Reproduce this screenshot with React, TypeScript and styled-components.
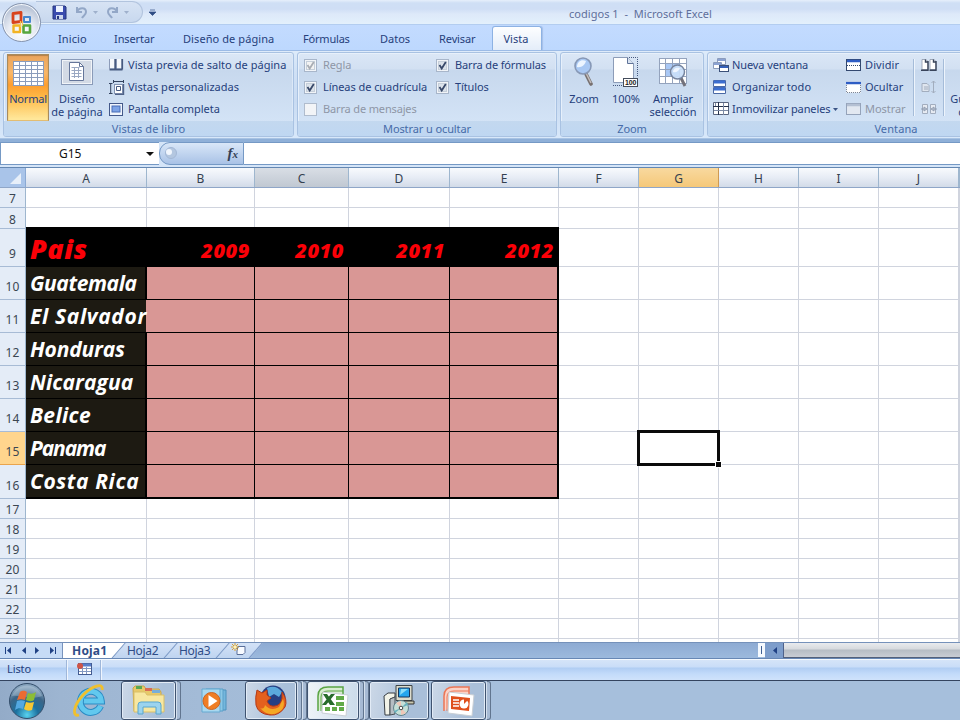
import React from "react";
import styled, { createGlobalStyle, css } from "styled-components";

const Global = createGlobalStyle`
  * { box-sizing: border-box; }
  html, body { margin: 0; padding: 0; overflow: hidden; }
  body { font: 11px/14px "Noto Sans", "Open Sans", sans-serif; color: #263f7c; }
  svg { display: block; flex: none; }
`;

const Window = styled.div`
  width: 960px; height: 720px; overflow: hidden; position: relative;
  display: flex; flex-direction: column; background: #c3d9f5;
`;

/* ---------- title bar ---------- */
const TitleBar = styled.header`
  height: 25px; flex: none; display: flex; align-items: center;
  background: linear-gradient(#e6effb 0, #cfdff5 3px, #cfdef5 9px, #dde9f9 14px, #e3f0fc 24px);
  border-bottom: 1px solid #b3cdf0;
`;
const QuickAccess = styled.div`
  margin-left: 36px; width: 107px; height: 22px; display: flex; align-items: center;
  padding-left: 16px; border: 1px solid #b2c4de; border-left: 0; border-radius: 0 11px 11px 0;
  background: linear-gradient(#d7e3f4, #c8d8ee);
`;
const Title = styled.div`
  margin-left: 413px; margin-top: 3px; letter-spacing: 0.03px;
  color: #5f6f9b; white-space: pre;
`;
const OfficeButton = styled.div`
  position: absolute; left: 2px; top: 3px; width: 39px; height: 39px; border-radius: 50%;
  border: 1px solid #8593ac; display: grid; place-items: center;
  background: radial-gradient(circle at 50% 75%, #fff 0, #e7ebf3 40%, #b9c4d7 75%, #dfe5ee 100%);
  box-shadow: inset 0 0 0 1px #f6f9fd;
`;

/* ---------- ribbon ---------- */
const Tabs = styled.nav`
  height: 25px; flex: none; display: grid; align-items: end;
  grid-template-columns: 58px 56px 69px 120px 77px 59px 53px 49px;
  background: linear-gradient(#c3dbff, #bdd8fe);
`;
const TabText = styled.span<{ $ls: number }>`
  height: 18px; white-space: nowrap; letter-spacing: ${(p) => p.$ls}px;
`;
const ActiveTab = styled.span`
  width: 50px; height: 24px; display: grid; place-items: center; letter-spacing: .05px;
  padding-right: 2px;
  border: 1px solid #8db2e3; border-bottom: 0; border-radius: 3px 3px 0 0;
  background: linear-gradient(#fdfeff, #e4edf9); box-shadow: 1px 0 1px #a6bfe8;
`;
const Ribbon = styled.section`
  height: 89px; flex: none; display: flex; gap: 3px; padding: 1px 0 2px 3px;
  border-top: 1px solid #9cbbe6; border-bottom: 1px solid #a8c3e4;
  background: linear-gradient(#deebfa, #d0e1f6 20px, #c9dbf2 50px, #d8e8fa);
`;
const Group = styled.section<{ $w: number }>`
  width: ${(p) => p.$w}px; height: 85px; flex: none; overflow: hidden;
  display: flex; flex-direction: column; border: 1px solid #a9c2e2; border-radius: 3px;
  box-shadow: inset 1px 1px 0 #e7f0fb, inset -1px 0 0 #dce8f7;
  background: linear-gradient(#dbe7f6 0, #d2e0f2 16px, #c7d8ed 17px, #d3e3f6 69px);
`;
const GroupBody = styled.div<{ $pad?: number }>`
  height: 68px; flex: none; display: flex; padding-left: ${(p) => p.$pad ?? 0}px;
`;
const GroupTitle = styled.div<{ $ls: number }>`
  height: 15px; line-height: 15px; text-align: center; color: #466ba8; white-space: nowrap;
  background: linear-gradient(#c3d8ef, #bfd7f2); letter-spacing: ${(p) => p.$ls}px;
`;
const BigButton = styled.div<{ $w: number; $on?: boolean; $ls?: number }>`
  width: ${(p) => p.$w}px; height: 67px; margin-top: 1px; flex: none;
  display: flex; flex-direction: column; align-items: center; white-space: nowrap;
  line-height: 13px; text-align: center; letter-spacing: ${(p) => p.$ls ?? 0.1}px;
  ${(p) => p.$on && css`
    border: 1px solid #a88b5d; border-bottom-color: #e3bd72;
    background: linear-gradient(#e9a45d 0, #f9b768 18px, #fd9e30 30px, #feb946 42px, #ffe79a 64px);
    box-shadow: inset 0 1px 1px #b4804a;
  `}
`;
const BigIcon = styled.div<{ $h?: number }>`height: ${(p) => p.$h ?? 36}px; flex: none; display: grid; place-items: center;`;
const Caption = styled.span`padding-top: 2px;`;
const Column = styled.div<{ $w: number; $ml?: number }>`
  width: ${(p) => p.$w}px; margin-left: ${(p) => p.$ml ?? 0}px; flex: none;
  display: grid; grid-template-rows: repeat(3, 22px); padding-top: 1px;
`;
const Command = styled.div<{ $ls: number; $off?: boolean; $gap?: number }>`
  display: flex; align-items: center; gap: ${(p) => p.$gap ?? 4}px; white-space: nowrap;
  letter-spacing: ${(p) => p.$ls}px; color: ${(p) => (p.$off ? "#8e96a6" : "#263f7c")};
`;
const Check = styled.span`
  width: 13px; height: 13px; flex: none; background: #f2f4f7; border: 1px solid #b0bccd;
`;
const Divider = styled.div`
  width: 2px; height: 57px; margin-top: 6px; flex: none;
  border-left: 1px solid #a5bcd9; border-right: 1px solid #edf4fc;
`;
const Spacer = styled.i<{ $w: number }>`width: ${(p) => p.$w}px; flex: none;`;

/* ---------- formula bar ---------- */
const FormulaArea = styled.section`
  height: 29px; flex: none; padding-top: 3px;
  border-bottom: 1px solid #6487b2; display: flex; align-items: flex-start;
  background: linear-gradient(#8fb0d8 0, #8fb0d8 3px, #d5e5f8 3px);
`;
const NameBox = styled.div`
  width: 159px; height: 23px; display: flex; align-items: center; justify-content: space-between;
  background: #fff; border: 1px solid #7599c5; border-right: 0; color: #111; font-size: 12px;
  padding: 0 5px 0 58px; letter-spacing: -.1px;
`;
const FxBox = styled.div`
  width: 85px; height: 23px; display: flex; align-items: center; justify-content: space-between;
  padding: 0 5px 0 4px; border: 1px solid #7599c5; border-radius: 11px 0 0 11px;
  background: linear-gradient(#d9e7f8, #a9c2e6);
  font: italic bold 15px "Liberation Serif", serif; color: #344055;
  small { font-size: 11px; }
`;
const FormulaInput = styled.div`
  flex: 1; height: 23px; background: #fff; border: 1px solid #7599c5; border-width: 1px 0;
`;

/* ---------- sheet ---------- */
const sheetColumns = "26px 121px 108px 94px 101px 109px repeat(5, 80px) 1px";
const ColumnHeads = styled.div`
  height: 20px; flex: none; display: grid; grid-template-columns: ${sheetColumns};
  border-bottom: 1px solid #8fa6c8;
`;
const ColumnHead = styled.div<{ $state?: string }>`
  text-align: center; font-size: 12px; line-height: 18px; padding-top: 2px; height: 19px; color: #33404f;
  border-right: 1px solid #9eb6ce;
  background: linear-gradient(#f8fafd, #e7ecf5 50%, #d2dbe8);
  ${(p) => p.$state === "dim" && css`background: linear-gradient(#d9dee5, #c0c8d2);`}
  ${(p) => p.$state === "on" && css`
    background: linear-gradient(#f8d99f, #f5c879); border-color: #cf9a52;
  `}
`;
const Corner = styled.div`
  background: #a9c4e9; border-right: 1px solid #8aa9d3; display: flex;
  align-items: flex-end; justify-content: flex-end; padding: 0 4px 3px 0;
`;
const Grid = styled.div`
  height: 454px; flex: none; overflow: hidden; position: relative; display: grid;
  grid-template-columns: ${sheetColumns};
  grid-template-rows: 20px 21px 38px repeat(6, 33px) 34px repeat(7, 20px) 4px;
  background: #fff;
`;
const RowHead = styled.div<{ $on?: boolean; $tall?: boolean }>`
  display: flex; align-items: flex-end; justify-content: center; font-size: 12px;
  line-height: 17px; color: #3b4652; letter-spacing: .2px; overflow: hidden;
  padding-bottom: ${(p) => (p.$tall ? 4 : 0)}px;
  border-right: 1px solid #9eb6ce; border-bottom: 1px solid ${(p) => (p.$on ? "#e9a44d" : "#a7bbd5")};
  background: ${(p) => (p.$on ? "#ffd58d" : "#e4ecf7")};
`;
const Cell = styled.div`border-right: 1px solid #d0d4de; border-bottom: 1px solid #d0d4de;`;
const TitleCell = styled.div<{ $first?: boolean }>`
  background: #000; margin-top: -2px; z-index: 1; display: flex; align-items: flex-end;
  justify-content: ${(p) => (p.$first ? "flex-start" : "flex-end")};
  padding: ${(p) => (p.$first ? "0 0 3px 4px" : "0 5px 4px 0")};
  color: #fb0007; white-space: nowrap;
  font: italic 800 ${(p) => (p.$first ? "27px/30px" : "20px/24px")} "Comic Sans MS", "Open Sans", "Noto Sans", sans-serif;
  letter-spacing: ${(p) => (p.$first ? ".5px" : ".6px")};
`;
const CountryCell = styled.div<{ $ls: number; $wide?: boolean; $last?: boolean }>`
  background: #1d1a12; color: #fff; white-space: nowrap; padding-left: 4px;
  font: italic 700 21px/32px "Comic Sans MS", "Open Sans", "Noto Sans", sans-serif;
  letter-spacing: ${(p) => p.$ls}px; position: relative; z-index: 1;
  border-right: ${(p) => (p.$wide ? 0 : 2)}px solid #000;
  border-bottom: ${(p) => (p.$last ? 2 : 1)}px solid #000;
  ${(p) => p.$wide && css`margin-right: 1px;`}
`;
const PinkCell = styled.div<{ $edge?: boolean; $last?: boolean; $bleed?: boolean }>`
  background: #d99795; border: 0 solid #000;
  border-right-width: ${(p) => (p.$edge ? 2 : 1)}px;
  border-bottom-width: ${(p) => (p.$last ? 2 : 1)}px;
  ${(p) => p.$bleed && css`margin-left: -1px;`}
`;
const ActiveCell = styled.div`
  position: absolute; left: 637px; top: 242px; width: 83px; height: 36px; border: 3px solid #0b0b0b;
  &::after {
    content: ""; position: absolute; right: -4px; bottom: -4px; width: 5px; height: 5px;
    background: #0b0b0b; outline: 1px solid #fff;
  }
`;

/* ---------- sheet tabs and scrollbar ---------- */
const SheetBar = styled.div`
  height: 17px; flex: none; display: flex; border-top: 1px solid #7591ba; border-bottom: 1px solid #6787b5;
  background: linear-gradient(#8eabd3, #9cb9dd);
`;
const SheetNav = styled.div`
  width: 63px; display: flex; align-items: center; justify-content: space-between;
  padding: 0 6px 0 5px; background: #c6dbf6; border-right: 1px solid #7893bd;
`;
const SheetTab = styled.div<{ $w: number; $on?: boolean; $ls: number }>`
  width: ${(p) => p.$w}px; height: 15px; line-height: 15px; white-space: nowrap; position: relative;
  font-size: 12px; letter-spacing: ${(p) => p.$ls}px; color: #2f4d87;
  background: ${(p) => (p.$on ? "#fff" : "linear-gradient(#d3e2f7, #bfd4f0)")};
  ${(p) => p.$on ? css`font-weight: 700; padding-left: 9px;
    clip-path: polygon(0 0, 100% 0, calc(100% - 13px) 100%, 0 100%);` : css`
    margin-left: -13px; padding-left: 14px;
    clip-path: polygon(13px 0, 100% 0, calc(100% - 13px) 100%, 0 100%);`}
  &::after {
    content: ""; position: absolute; right: 6px; top: 0; width: 2px; height: 15px;
    background: #7f9cc8; transform: skewX(-41deg);
  }
`;
const ScrollGrip = styled.div`
  width: 7px; height: 14px; margin: 0 0 0 auto; background: #f5f9fe; display: grid; place-items: center;
  &::after { content: ""; width: 1px; height: 8px; background: #3f5f94; }
`;
const ScrollLeft = styled.div`width: 18px; background: #7d9dcb; display: grid; place-items: center;`;
const ScrollThumb = styled.div`
  width: 177px; border-left: 1px solid #4f628a; border-bottom: 1px solid #53607a;
  background: linear-gradient(#e9ebee, #d7dade 6px, #b6bcc4 7px, #c9cdd4);
`;
const StatusBar = styled.div`
  height: 22px; flex: none; display: flex; align-items: center; border-top: 1px solid #f4f9ff;
  border-bottom: 1px solid #34445f;
  background: linear-gradient(#d5e4f8 0, #c9ddf8 7px, #b0cdf3 8px, #c3dbfa 14px, #cfe2fb);
`;
const StatusText = styled.span`width: 66px; padding: 0 0 2px 7px; letter-spacing: -.1px;`;
const StatusCell = styled.span`
  width: 35px; height: 20px; display: flex; justify-content: center; padding-top: 2px;
  border-left: 1px solid #9fb7da; border-right: 1px solid #9fb7da;
  box-shadow: inset 1px 0 0 #eff5fe, 1px 0 0 #eff5fe;
`;

/* ---------- taskbar ---------- */
const TaskBar = styled.footer`
  height: 39px; flex: none; display: flex; align-items: stretch; padding-left: 6px;
  background: linear-gradient(90deg, #93abc8 0, #9db5d1 60px, #a3bbd7 200px, #a6bfdc 500px);
`;
const TaskItem = styled.div<{ $w: number; $ml?: number }>`
  width: ${(p) => p.$w}px; margin-left: ${(p) => p.$ml ?? 0}px; flex: none; display: grid; place-items: center;
`;
const TaskButton = styled(TaskItem)<{ $bright?: boolean }>`
  border: 1px solid #3f5370; border-radius: 3px; box-shadow: inset 0 0 0 1px #e2ebf6;
  background: ${(p) => (p.$bright ? "linear-gradient(90deg, #eef3f8, #cbdbea)" : "linear-gradient(100deg, #ccd8e7, #a9bfd9 70%)")};
`;
const StackEdge = styled.div`
  width: 5px; border: 1px solid #61758f; border-left: 1px solid #d4e0ee; border-radius: 0 3px 3px 0;
  background: #a6bad4;
`;

/* ---------- drawings ---------- */
const Arrow = ({ c = "#3a5485", w = 5 }) => (
  <svg width={w} height={w > 6 ? 4 : 3} viewBox="0 0 6 3" preserveAspectRatio="none"><path d="M0 0h6L3 3z" fill={c} /></svg>
);
const CheckMark = ({ off }: { off?: boolean }) => (
  <svg width="13" height="13">
    <rect x=".5" y=".5" width="12" height="12" fill="#f1f4f8" stroke="#a8b6ca" />
    <rect x="2.5" y="2.5" width="8" height="8" fill={off ? "#f3f3f3" : "#dbe2ea"} stroke="#c6cfda" />
    <path d="M3.5 6l2.2 3.5L9.8 3" fill="none" stroke={off ? "#a9adb4" : "#39496a"} strokeWidth="1.8" />
  </svg>
);
const OfficeLogo = () => (
  <svg width="25" height="26" viewBox="0 0 25 26" fill="none" strokeLinejoin="round">
    <path d="M4 3.500l8-1v9l-8 1z" stroke="#d8431c" strokeWidth="2.800" />
    <path d="M15 7h6v5h-6z" stroke="#4788cf" strokeWidth="2" />
    <path d="M4.500 15.500h6.500v6.500H4.500z" stroke="#f2b322" strokeWidth="2.400" />
    <path d="M14.500 15.500H21v7h-6.500z" stroke="#57a63d" strokeWidth="2.600" />
    <path d="M11.500 11v6M13.500 11v5" stroke="#f3c65a" strokeWidth="1.200" />
  </svg>
);
const SaveIcon = () => (
  <svg width="15" height="15" viewBox="0 0 15 15">
    <path d="M1 1h12l1 1v12H1z" fill="#3b4cae" stroke="#27377f" />
    <path d="M4 1h7v6H4z" fill="#edf3ff" /><path d="M4 10h7v4H4z" fill="#cdd7ec" /><path d="M5 11h2v3H5z" fill="#27377f" />
  </svg>
);
const UndoIcon = ({ flip }: { flip?: boolean }) => (
  <svg width="13" height="13" viewBox="0 0 13 13">
    <g transform={flip ? "translate(13 0) scale(-1 1)" : undefined} fill="none" stroke="#93a7c7" strokeWidth="2">
      <path d="M2 1v5h5M2 6c2-5 9-5 9 0 0 3-3 4-4 6" />
    </g>
  </svg>
);
const NormalIcon = () => (
  <svg width="33" height="28"><rect x="1" y="2" width="31" height="25" fill="#fff" />
    <path d="M1 2.500h31M1 6.500h31M1 10.500h31M1 14.500h31M1 18.500h31M1 22.500h31M1 26.500h31M1.500 2v25M7.500 2v25M13.500 2v25M19.500 2v25M25.500 2v25M31.500 2v25" stroke="#8a9cbc" fill="none" />
  </svg>
);
const PageLayoutIcon = () => (
  <svg width="32" height="26"><rect x=".5" y=".5" width="31" height="25" fill="#f1f4f8" stroke="#8a9bb8" />
    <rect x="2" y="2" width="28" height="22" fill="#d3dae5" />
    <path d="M8.500 3.500h10l4 4v14h-14z" fill="#fff" stroke="#65769a" /><path d="M18.500 3.500v4h4" fill="none" stroke="#65769a" />
    <path d="M10.500 8.500h8M10.500 11.500h10M10.500 14.500h10M10.500 17.500h10M13.500 8v11M17.500 8v11" stroke="#9aa8c2" fill="none" />
  </svg>
);
const BreakIcon = () => (
  <svg width="15" height="14"><path d="M1 1h5v9H1zM8 1h5v9H8z" fill="#f5f8fc" /><path d="M.500 1v11.500M7.500 1v10" stroke="#8d9cb9" fill="none" /><path d="M6.200 1v9.500M13.200 1v10.500M1 11.500h12.500" fill="none" stroke="#475a80" strokeWidth="1.800" /></svg>
);
const CustomViewIcon = () => (
  <svg width="16" height="15"><path d="M0 3.500h3.500M1.700 4v9M0 13.500h3.500M5 1.500h9M4.500 0v3M14.500 0v3" stroke="#33435f" fill="none" />
    <rect x="5.500" y="4.500" width="8" height="9" fill="#fff" stroke="#8595b3" /><path d="M7.500 6.500h4v4h-4z" fill="#fff" stroke="#475b82" /><path d="M14.500 4v10.500H6" stroke="#4f6288" strokeWidth="1.400" fill="none" /></svg>
);
const FullIcon = () => (
  <svg width="14" height="13"><rect x=".5" y=".5" width="13" height="12" fill="#f0f5fc" stroke="#44598a" /><rect x="3" y="3" width="8" height="6" fill="#7da3e6" stroke="#486cb6" /></svg>
);
const ZoomIcon = () => (
  <svg width="22" height="32" viewBox="0 0 22 32">
    <path d="M13 18l5 10" stroke="#77706f" strokeWidth="3.600" strokeLinecap="round" />
    <path d="M13 17l5 10" stroke="#c2bcbc" strokeWidth="1.500" />
    <circle cx="10" cy="10" r="8" fill="#a9c8f3" stroke="#8798b6" strokeWidth="1.600" />
    <path d="M4 11c0-6 5-8 9-6-1 4-5 7-9 6" fill="#edf5ff" />
  </svg>
);
const HundredIcon = () => (
  <svg width="30" height="32" viewBox="0 0 30 32">
    <path d="M2.500 1.500h14l6 6v19h-20z" fill="#fff" stroke="#8c9cb8" /><path d="M16.500 1.500v6h6" fill="#d8e2f0" stroke="#5f7398" />
    <path d="M18 1.500h8.500v19M2 29.500h11" stroke="#45587e" strokeDasharray="1 1" fill="none" />
    <rect x="12.500" y="22.500" width="14" height="8" fill="#fff" stroke="#444c5b" />
    <text x="14" y="29.300" fontSize="7" fontFamily="Liberation Sans" fontWeight="700" letterSpacing="-.2" fill="#222">100</text>
  </svg>
);
const ZoomSelIcon = () => (
  <svg width="32" height="32" viewBox="0 0 32 32">
    <path d="M2 2h28v26H2z" fill="#fff" /><path d="M9 8h14v13H9z" fill="#a9c8f5" />
    <path d="M2.500 2v26M8.500 2v26M15.500 2v26M22.500 2v26M29.500 2v26M2 2.500h28M2 7.500h28M2 13.500h28M2 20.500h28M2 27.500h28" stroke="#94a3bd" fill="none" />
    <path d="M24 22l4 8" stroke="#73717a" strokeWidth="3" /><circle cx="20.500" cy="16" r="7" fill="#c9dffa" fillOpacity=".9" stroke="#77859f" strokeWidth="1.500" />
    <path d="M16 16c0-4 4-5 7-4-1 3-4 5-7 4" fill="#f0f6ff" />
  </svg>
);
const NewWinIcon = () => (
  <svg width="16" height="15"><path d="M4.500.500h8v6h-8zM.500 4.500h8v6h-8z" fill="#fff" stroke="#8b9cbd" /><path d="M5 2h7M1 6h7" stroke="#8ba2d3" strokeWidth="2" />
    <rect x="6.500" y="7.500" width="9" height="6" fill="#fff" stroke="#3b5078" /><path d="M7 9h8" stroke="#3561ba" strokeWidth="2" /></svg>
);
const ArrangeIcon = () => (
  <svg width="13" height="14"><path d="M.500.500h12v6H.500zM.500 7.500h12v6H.500z" fill="#fff" stroke="#4a68a5" /><path d="M1 2h11M1 9h11" stroke="#3c6ed1" strokeWidth="3" /></svg>
);
const FreezeIcon = () => (
  <svg width="16" height="14"><path d="M.500.500h15v12H.500z" fill="#fff" stroke="#5a6680" /><path d="M5.500 0v13M0 4.500h16" stroke="#26324b" fill="none" /><path d="M10.500 1v12M1 8.500h14M2.500 1v3" stroke="#7c8aa5" fill="none" /></svg>
);
const WinIcon = ({ kind }: { kind: string }) => {
  const c = kind === "off" ? "#b4c0d3" : "#2e5dc4";
  return (
    <svg width="15" height="13"><rect x=".5" y=".5" width="14" height="11" fill={kind === "off" ? "#e2e8f1" : "#fff"} stroke={kind === "hide" ? "#eef1f5" : kind === "off" ? "#95a3ba" : "#33486f"} />
      <path d={kind === "hide" ? "M0 2h15" : "M1 2h13"} stroke={c} strokeWidth="2.500" />{kind === "split" && <path d="M1 6.500h13" stroke="#33486f" strokeDasharray="1 1" />}
      {kind === "hide" && <path d="M.500 4v7.500h14V4" fill="none" stroke="#7d8696" strokeDasharray="1 1" />}</svg>
  );
};
const SideIcon = ({ kind }: { kind: number }) => (
  <svg width="16" height="14" fill="none">
    {kind === 0 ? <><path d="M1 1.500h4l2 2v8H1zM9 1.500h4l2 2v8H9z" fill="#fff" stroke="#8d97a9" strokeWidth=".8" /><path d="M0 12.200h7V3M8.500 12.200H15V3M4.500 1.500v2.500H7M12.500 1.500v2.500H15" stroke="#39445a" strokeWidth="1.400" /></>
      : kind === 1 ? <><path d="M1 3.500h5l2 2v6H1z" fill="#dfe5ee" stroke="#a2adbe" /><path d="M3 7h4M3 9h4M12.500 1v12M10.500 3l2-2 2 2M10.500 11l2 2 2-2" stroke="#a2adbe" /></>
        : <><path d="M1.500 2.500h5v9h-5zM9.500 2.500h5v9h-5z" fill="#e7ebf2" stroke="#a2adbe" /><path d="M0 7h5M3 5v4l3-2zM16 7h-5M13 5v4l-3-2z" stroke="#8490a6" strokeWidth=".8" /></>}
  </svg>
);
const NavIcon = ({ end, left }: { end?: boolean; left?: boolean }) => (
  <svg width="7" height="7" fill="#204184"><g transform={left ? undefined : "translate(7 0) scale(-1 1)"}><path d="M6 0v7L2 3.500z" />{end && <path d="M0 0h1v7H0z" />}</g></svg>
);
const NewSheetIcon = () => (
  <svg width="17" height="13"><path d="M7 3.500h7v6l-2 2H6V8z" fill="#f7faff" stroke="#5a6f9a" /><path d="M4 0v8M0 4h8M1 1l6 6M7 1L1 7" stroke="#d9981c" strokeWidth=".9" /><circle cx="4" cy="4" r="1.500" fill="#fff3b5" /></svg>
);
const MacroIcon = () => (
  <svg width="16" height="14"><rect x="2.500" y="1.500" width="13" height="11" fill="#fff" stroke="#445c91" /><path d="M3 3h12" stroke="#587fca" strokeWidth="3" /><path d="M3 6.500h12M3 9.500h12M6.500 5v7M10.500 5v7" stroke="#8298c1" /><circle cx="4" cy="4" r="3" fill="#cf5548" /></svg>
);
const StartOrb = () => (
  <svg width="38" height="38" viewBox="0 0 38 38">
    <defs><radialGradient id="orb" cx=".5" cy=".9" r=".8"><stop stopColor="#59d3ef" /><stop offset=".4" stopColor="#1c719f" /><stop offset=".75" stopColor="#3c6587" /><stop offset="1" stopColor="#86a3bd" /></radialGradient></defs>
    <circle cx="19" cy="19" r="17.500" fill="url(#orb)" stroke="#344e6b" />
    <path d="M4 14C10 0 28 0 34 14 24 18 14 13 4 14" fill="#d7e5ef" opacity=".3" />
    <path d="M12 10c3-2 5-1 7 0l-2 8c-3-1-5-1-8 0z" fill="#eb6b32" /><path d="M20 11c3 1 5 1 8-1l-2 8c-3 2-5 1-8 0z" fill="#8bbd36" />
    <path d="M9 19c3-1 5-1 8 0l-2 8c-3-1-5-1-8 1z" fill="#53a8e1" /><path d="M18 20c3 1 5 1 8 0l-2 8c-3 1-5 1-8-1z" fill="#f6c733" />
  </svg>
);
const BrowserE = () => (
  <svg width="36" height="34" viewBox="0 0 36 34" fill="none">
    <path d="M28.500 22a10.500 10.500 0 1 1 .8-5H12" stroke="#2b8bc4" strokeWidth="7" />
    <path d="M28.500 22a10.500 10.500 0 1 1 .8-5H12" stroke="#62c8ee" strokeWidth="5" />
    <path d="M7 31C0 33 1 22 11 11 20 2 32-2 30 6" stroke="#f0c02e" strokeWidth="2.800" />
  </svg>
);
const FolderIcon = () => (
  <svg width="36" height="33" viewBox="0 0 36 33">
    <path d="M2 4l2-2h9l2 3h13l2 3v19H3z" fill="#e8c969" stroke="#c8a64d" /><path d="M5 2h6v3H5z" fill="#59a852" /><path d="M14 4h7v3h-7z" fill="#d86c56" /><path d="M21 6h8v3h-8z" fill="#77aeda" />
    <path d="M3 8h11l2 3h17v17H3z" fill="#f7e7a1" stroke="#d9bf69" /><path d="M7 30v-9q0-3 3-3h17q3 0 3 3v9h-5v-7H12v7z" fill="#9bd3ee" stroke="#58a6cf" />
  </svg>
);
const MediaIcon = () => (
  <svg width="28" height="28" viewBox="0 0 28 28"><path d="M8 3h18v20H8z" fill="#74b7dd" stroke="#4e92bd" /><path d="M6 2h17v22H6z" fill="#8cc8e6" stroke="#5ba0c9" /><path d="M2 2h18v23H2z" fill="#a9d8ef" stroke="#64a9d1" />
    <circle cx="11.500" cy="14" r="8.500" fill="#ef7d24" stroke="#cc6423" /><path d="M8.500 8v12l9-6z" fill="#fff" /></svg>
);
const FirefoxIcon = () => (
  <svg width="32" height="32" viewBox="0 0 32 32"><circle cx="18" cy="13" r="12.500" fill="#263f83" /><path d="M12 3q9-4 15 4l-3 5-5-3-5 3z" fill="#5ba9dc" />
    <path d="M2 5l5 3 5-3v5l4 3-4 3q2 6 8 5 6-1 7-8V7q6 8 3 15-6 9-15 8Q3 29 1 20q-1-8 1-15" fill="#e3601e" stroke="#b43a18" /><path d="M10 20q6 7 14 2l4-8q3 9-4 13-10 6-19-4 4 2 5-3" fill="#f4a825" /></svg>
);
const OfficeApp = ({ green }: { green?: boolean }) => {
  const a = green ? "#5aa443" : "#ec7655";
  return (
    <svg width="34" height="32" viewBox="0 0 34 32"><path d="M2 26V11Q2 2 12 2h15v8" fill={green ? "#d8edd0" : "#fbd2c6"} stroke={a} strokeWidth="1.500" />
      <path d="M5 26V12q0-6 7-6h15" fill="none" stroke={a} /><path d="M7 7l25 3-2 21-24-3z" fill="#fff" stroke="#c9cfd5" />
      {green ? <><path d="M20 11h8v4h-8zM20 17h8v4h-8zM9 22h5v4H9zM16 22h5v4h-5zM23 22h5v4h-5z" fill="#62aa48" /><path d="M7 9h4l8 11h-5zM15 9h4L10 20H6z" fill="#276b2b" /></>
        : <><path d="M9 11l19 2-1 13-18-2z" fill="#df501d" /><circle cx="22" cy="19" r="4.500" fill="#fff" /><path d="M11 15h6M11 18h6M11 21h6" stroke="#fff" strokeWidth="1.500" /><path d="M22 19v-5h5z" fill="#df501d" /></>}
    </svg>
  );
};
const InstallerIcon = () => (
  <svg width="32" height="33" viewBox="0 0 32 33"><path d="M13 1.500h16v15H13z" fill="#dcdccd" stroke="#3f4447" /><path d="M15.500 4h11v9h-11z" fill="#25a6ef" stroke="#16345c" /><path d="M18 5h7l-8 6z" fill="#8bdcf8" /><path d="M17 17h14v3H18z" fill="#c9c7ae" stroke="#333" />
    <path d="M1 12l4-3h7v4l-5 2v16H2z" fill="#f2f3e8" stroke="#363c43" /><path d="M7 15l5-2v17l-5 1z" fill="#b6bdc3" stroke="#495056" /><circle cx="18" cy="24" r="7.500" fill="#c5dfd7" stroke="#62808b" /><path d="M18 24l-5-5 5-2zM18 24l5 5-5 2z" fill="#f0c6b7" /><path d="M18 24l7-3-1-3zM18 24l-7 3 1 2z" fill="#69b2be" /><circle cx="18" cy="24" r="1.800" fill="#fff" stroke="#444" /></svg>
);

/* ---------- data ---------- */
const rows = Array.from({ length: 17 }, (_, i) => i + 7);
const countries: [string, number][] = [["Guatemala", -.4], ["El Salvador", .65], ["Honduras", -.15], ["Nicaragua", .1], ["Belice", .35], ["Panama", -1.1], ["Costa Rica", .6]];
const years = ["2009", "2010", "2011", "2012"];
const tabs: [string, number][] = [["", 0], ["Inicio", .1], ["Insertar", -.1], ["Diseño de página", .08], ["Fórmulas", -.2], ["Datos", 0], ["Revisar", -.1]];

const SheetRow = ({ n }: { n: number }) => {
  const c = n - 10;
  const isCountry = c >= 0 && c < 7;
  return (
    <>
      <RowHead $on={n === 15} $tall={n === 9 || isCountry}>{n}</RowHead>
      {n === 9 && <><TitleCell $first>Pais</TitleCell>{years.map((y) => <TitleCell key={y}>{y}</TitleCell>)}</>}
      {isCountry && <>
        <CountryCell $ls={countries[c][1]} $wide={n === 11} $last={c === 6}>{countries[c][0]}</CountryCell>
        {years.map((y, i) => <PinkCell key={y} $edge={i === 3} $last={c === 6} $bleed={n === 11 && i === 0} />)}
      </>}
      {Array.from({ length: isCountry || n === 9 ? 6 : 11 }, (_, i) => <Cell key={i} />)}
    </>
  );
};

export default function App() {
  return (
    <Window>
      <Global />
      <TitleBar>
        <QuickAccess>
          <SaveIcon /><Spacer $w={8} /><UndoIcon /><Spacer $w={5} /><Arrow c="#9fb0cc" /><Spacer $w={8} /><UndoIcon flip /><Spacer $w={5} /><Arrow c="#9fb0cc" />
        </QuickAccess>
        <Spacer $w={6} /><svg width="7" height="7"><path d="M1 1h5M0 3h7L3.500 6.500z" stroke="#304e85" fill="#304e85" strokeWidth=".7" /></svg>
        <Title>codigos 1  -  Microsoft Excel</Title>
      </TitleBar>
      <Tabs>{tabs.map(([t, ls]) => <TabText key={t} $ls={ls}>{t}</TabText>)}<ActiveTab>Vista</ActiveTab></Tabs>
      <OfficeButton><OfficeLogo /></OfficeButton>
      <Ribbon>
        <Group $w={291}>
          <GroupBody $pad={3}>
            <BigButton $w={42} $on $ls={-0.2}><BigIcon $h={35}><NormalIcon /></BigIcon><Caption>Normal</Caption></BigButton>
            <BigButton $w={56} $ls={0}><BigIcon><PageLayoutIcon /></BigIcon><Caption>Diseño<br />de página</Caption></BigButton>
            <Column $w={180} $ml={4}>
              <Command $ls={0.04}><BreakIcon />Vista previa de salto de página</Command>
              <Command $ls={0.02} $gap={3}><CustomViewIcon />Vistas personalizadas</Command>
              <Command $ls={-0.05} $gap={5}><FullIcon />Pantalla completa</Command>
            </Column>
          </GroupBody>
          <GroupTitle $ls={0.07}>Vistas de libro</GroupTitle>
        </Group>
        <Group $w={260}>
          <GroupBody $pad={6}>
            <Column $w={132}>
              <Command $ls={-0.1} $gap={6} $off><CheckMark off />Regla</Command>
              <Command $ls={-0.06} $gap={6}><CheckMark />Líneas de cuadrícula</Command>
              <Command $ls={-0.15} $gap={6} $off><Check />Barra de mensajes</Command>
            </Column>
            <Column $w={115}>
              <Command $ls={-0.15} $gap={6}><CheckMark />Barra de fórmulas</Command>
              <Command $ls={-0.1} $gap={6}><CheckMark />Títulos</Command>
            </Column>
          </GroupBody>
          <GroupTitle $ls={-0.1}>Mostrar u ocultar</GroupTitle>
        </Group>
        <Group $w={144}>
          <GroupBody $pad={2}>
            <BigButton $w={42} $ls={-0.1}><BigIcon><ZoomIcon /></BigIcon><Caption>Zoom</Caption></BigButton>
            <BigButton $w={42} $ls={0}><BigIcon><HundredIcon /></BigIcon><Caption>100%</Caption></BigButton>
            <BigButton $w={52} $ls={-0.05}><BigIcon><ZoomSelIcon /></BigIcon><Caption>Ampliar<br />selección</Caption></BigButton>
          </GroupBody>
          <GroupTitle $ls={-0.1}>Zoom</GroupTitle>
        </Group>
        <Group $w={378}>
          <GroupBody $pad={5}>
            <Column $w={133}>
              <Command $ls={-0.1} $gap={3}><NewWinIcon />Nueva ventana</Command>
              <Command $ls={0.05} $gap={6}><ArrangeIcon />Organizar todo</Command>
              <Command $ls={-0.1} $gap={3}><FreezeIcon />Inmovilizar paneles <Arrow /></Command>
            </Column>
            <Column $w={67}>
              <Command $ls={0.1}><WinIcon kind="split" />Dividir</Command>
              <Command $ls={0}><WinIcon kind="hide" />Ocultar</Command>
              <Command $ls={-0.05} $off><WinIcon kind="off" />Mostrar</Command>
            </Column>
            <Divider />
            <Column $w={16} $ml={6}>{[0, 1, 2].map((k) => <Command key={k} $ls={0}><SideIcon kind={k} /></Command>)}</Column>
            <Spacer $w={6} /><Divider /><Spacer $w={4} />
            <BigButton $w={72} $ls={0.1}><BigIcon /><Caption>Guardar área<br />de trabajo</Caption></BigButton>
          </GroupBody>
          <GroupTitle $ls={0.1}>Ventana</GroupTitle>
        </Group>
      </Ribbon>
      <FormulaArea>
        <NameBox>G15 <Arrow c="#111" w={8} /></NameBox>
        <FxBox><svg width="15" height="15"><circle cx="7" cy="7" r="5.500" fill="#b4c7e0" stroke="#a3b8d6" /><circle cx="5" cy="6" r="3" fill="#f1f6fd" /></svg><span>f<small>x</small></span></FxBox>
        <FormulaInput />
      </FormulaArea>
      <ColumnHeads>
        <Corner><svg width="11" height="11"><path d="M11 0v11H0z" fill="#e7eff9" /></svg></Corner>
        {"ABCDEFGHIJ".split("").map((l) => <ColumnHead key={l} $state={l === "C" ? "dim" : l === "G" ? "on" : ""}>{l}</ColumnHead>)}
        <ColumnHead />
      </ColumnHeads>
      <Grid>
        {rows.map((n) => <SheetRow key={n} n={n} />)}
        <RowHead />{Array.from({ length: 11 }, (_, i) => <Cell key={i} />)}
        <ActiveCell />
      </Grid>
      <SheetBar>
        <SheetNav><NavIcon end left /><NavIcon left /><NavIcon /><NavIcon end /></SheetNav>
        <SheetTab $w={63} $on $ls={0.2}>Hoja1</SheetTab>
        <SheetTab $w={65} $ls={-0.3}>Hoja2</SheetTab>
        <SheetTab $w={65} $ls={-0.3}>Hoja3</SheetTab>
        <SheetTab $w={46} $ls={0}><NewSheetIcon /></SheetTab>
        <ScrollGrip /><ScrollLeft><NavIcon left /></ScrollLeft><ScrollThumb />
      </SheetBar>
      <StatusBar><StatusText>Listo</StatusText><StatusCell><MacroIcon /></StatusCell></StatusBar>
      <TaskBar>
        <TaskItem $w={42}><StartOrb /></TaskItem>
        <TaskItem $w={44} $ml={20}><BrowserE /></TaskItem>
        <TaskButton $w={55} $ml={9}><FolderIcon /></TaskButton><StackEdge />
        <TaskItem $w={44} $ml={11}><MediaIcon /></TaskItem>
        <TaskButton $w={52} $ml={9}><FirefoxIcon /></TaskButton><StackEdge /><StackEdge />
        <TaskButton $w={52} $bright><OfficeApp green /></TaskButton><StackEdge /><StackEdge />
        <TaskButton $w={60}><InstallerIcon /></TaskButton>
        <TaskButton $w={55} $ml={2}><OfficeApp /></TaskButton><StackEdge />
      </TaskBar>
    </Window>
  );
}
